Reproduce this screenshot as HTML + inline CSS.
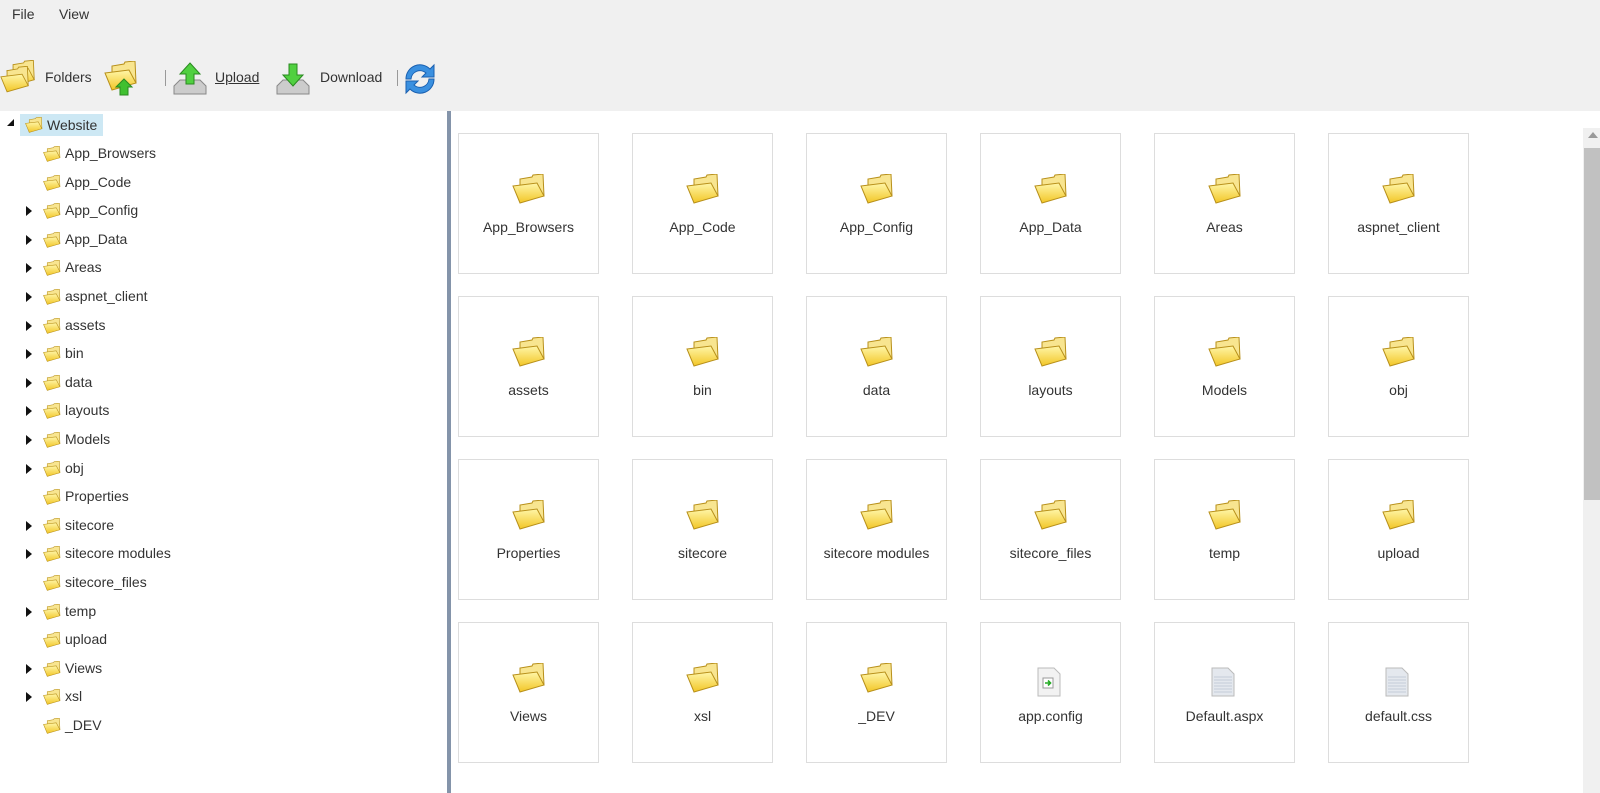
<!DOCTYPE html>
<html><head><meta charset="utf-8"><style>
*{margin:0;padding:0;box-sizing:border-box}
body{width:1600px;height:793px;overflow:hidden;background:#fff;font-family:"Liberation Sans",sans-serif;color:#333;position:relative}
.top{position:absolute;left:0;top:0;width:1600px;height:111px;background:#f0f0f0}
.t{position:absolute;font-size:14px;white-space:nowrap}
.tree .r{position:absolute;height:20px;font-size:14px;line-height:20px}
.arrow{position:absolute;width:0;height:0;border-top:5px solid transparent;border-bottom:5px solid transparent;border-left:6px solid #111}
.tile{position:absolute;width:141px;height:141px;border:1px solid #ddd;background:#fff}
.tile .lbl{position:absolute;left:0;right:0;top:85px;text-align:center;font-size:14px;color:#333}
.tile svg{position:absolute;left:53px;top:40px}
</style></head><body>
<svg width="0" height="0" style="position:absolute"><defs>
<linearGradient id="fg" x1="0" y1="0" x2="0" y2="1"><stop offset="0" stop-color="#fff6a8"/><stop offset="1" stop-color="#f2c626"/></linearGradient>
<symbol id="fold" viewBox="0 0 34 30"><path d="M8 10 L8 5 L20 3 L21 1 L31 0 L32 22 L8 27 Z" fill="#f8e590" stroke="#b8901a" stroke-width="1"/><path d="M1 12 L25 9 L32 22 L8 29 Z" fill="url(#fg)" stroke="#b8901a" stroke-width="1"/></symbol>
</defs></svg>
<div class="top">
<div class="t" style="left:12px;top:6px">File</div>
<div class="t" style="left:59px;top:6px">View</div>
<svg style="position:absolute;left:0;top:60px" width="36" height="36"><use href="#fold" x="6" y="0" width="30" height="27"/><use href="#fold" x="0" y="6" width="30" height="27"/></svg>
<div class="t" style="left:45px;top:69px">Folders</div>
<svg style="position:absolute;left:104px;top:61px" width="36" height="36"><use href="#fold" x="0" y="0" width="34" height="30"/><path d="M20 18 L28 26 L24 26 L24 34 L16 34 L16 26 L12 26 Z" fill="#40c030" stroke="#2a8a20"/></svg>
<div style="position:absolute;left:165px;top:70px;width:1px;height:16px;background:#999"></div>
<svg style="position:absolute;left:172px;top:62px" width="36" height="36"><path d="M2 24 L8 18 L28 18 L34 24 L34 32 L2 32 Z" fill="#ccc" stroke="#888"/><path d="M18 1 L28 12 L22 12 L22 22 L14 22 L14 12 L8 12 Z" fill="#50d040" stroke="#2a8a20"/></svg>
<div class="t" style="left:215px;top:69px;text-decoration:underline">Upload</div>
<svg style="position:absolute;left:275px;top:62px" width="36" height="36"><path d="M2 24 L8 18 L28 18 L34 24 L34 32 L2 32 Z" fill="#ccc" stroke="#888"/><path d="M18 24 L28 13 L22 13 L22 2 L14 2 L14 13 L8 13 Z" fill="#50d040" stroke="#2a8a20"/></svg>
<div class="t" style="left:320px;top:69px">Download</div>
<div style="position:absolute;left:397px;top:70px;width:1px;height:16px;background:#999"></div>
<svg style="position:absolute;left:402px;top:61px" width="36" height="36"><path d="M4 18 A14 14 0 0 1 28 8 L32 4 L32 16 L20 16 L24 12 A9 9 0 0 0 9 18 Z" fill="#3a90e0" stroke="#1a60b0"/><path d="M32 18 A14 14 0 0 1 8 28 L4 32 L4 20 L16 20 L12 24 A9 9 0 0 0 27 18 Z" fill="#3a90e0" stroke="#1a60b0"/></svg>
</div>
<div class="tree">
<div style="position:absolute;left:7px;top:119px;width:0;height:0;border-left:7px solid transparent;border-bottom:7px solid #111"></div>
<div style="position:absolute;left:20px;top:114px;width:83px;height:22px;background:#cde8f4"></div>
<svg style="position:absolute;left:25px;top:117px" width="18" height="16"><use href="#fold" width="18" height="16"/></svg>
<div class="r" style="left:47px;top:115px">Website</div>
</div>
<div id="tree"></div>
<div style="position:absolute;left:447px;top:111px;width:4px;height:682px;background:#8494aa"></div>
<div id="tiles"></div>
<div style="position:absolute;left:1583px;top:128px;width:17px;height:665px;background:#f0f0f0"></div>
<div style="position:absolute;left:1588px;top:132px;width:0;height:0;border-left:5px solid transparent;border-right:5px solid transparent;border-bottom:6px solid #999"></div>
<div style="position:absolute;left:1584px;top:148px;width:16px;height:352px;background:#c1c1c1"></div>
<script>
var tr=[["App_Browsers",0],["App_Code",0],["App_Config",1],["App_Data",1],["Areas",1],["aspnet_client",1],["assets",1],["bin",1],["data",1],["layouts",1],["Models",1],["obj",1],["Properties",0],["sitecore",1],["sitecore modules",1],["sitecore_files",0],["temp",1],["upload",0],["Views",1],["xsl",1],["_DEV",0]];
var h="";tr.forEach(function(a,i){var y=154+i*28.6;
if(a[1])h+='<div class="arrow" style="left:26px;top:'+(y-5)+'px"></div>';
h+='<svg style="position:absolute;left:43px;top:'+(y-8)+'px" width="18" height="16"><use href="#fold" width="18" height="16"/></svg>';
h+='<div class="t" style="left:65px;top:'+(y-9)+'px">'+a[0]+'</div>';});
document.getElementById("tree").innerHTML=h;
var ti=["App_Browsers","App_Code","App_Config","App_Data","Areas","aspnet_client","assets","bin","data","layouts","Models","obj","Properties","sitecore","sitecore modules","sitecore_files","temp","upload","Views","xsl","_DEV","app.config","Default.aspx","default.css"];
h="";ti.forEach(function(n,i){var c=i%6,r=Math.floor(i/6);var x=458+c*174,y=133+r*163;
var ic;
if(i<21)ic='<svg width="34" height="30"><use href="#fold" width="34" height="30"/></svg>';
else if(i==21)ic='<svg style="left:55px;top:44px" width="26" height="30"><path d="M2 1 L18 1 L24 7 L24 29 L2 29 Z" fill="#f2f2f2" stroke="#bbb"/><rect x="7" y="11" width="10" height="10" fill="#fff" stroke="#999"/><path d="M9 16 L14 16 M12 13.5 L14.5 16 L12 18.5" stroke="#2a2" stroke-width="1.6" fill="none"/></svg>';
else ic='<svg style="left:55px;top:44px" width="26" height="30"><path d="M2 1 L18 1 L24 7 L24 29 L2 29 Z" fill="#e4e8ee" stroke="#bbb"/><path d="M4 10H22M4 13H22M4 16H22M4 19H22M4 22H22M4 25H22" stroke="#c4ccd8"/></svg>';
h+='<div class="tile" style="left:'+x+'px;top:'+y+'px">'+ic+'<div class="lbl">'+n+'</div></div>';});
document.getElementById("tiles").innerHTML=h;
</script>
</body></html>
